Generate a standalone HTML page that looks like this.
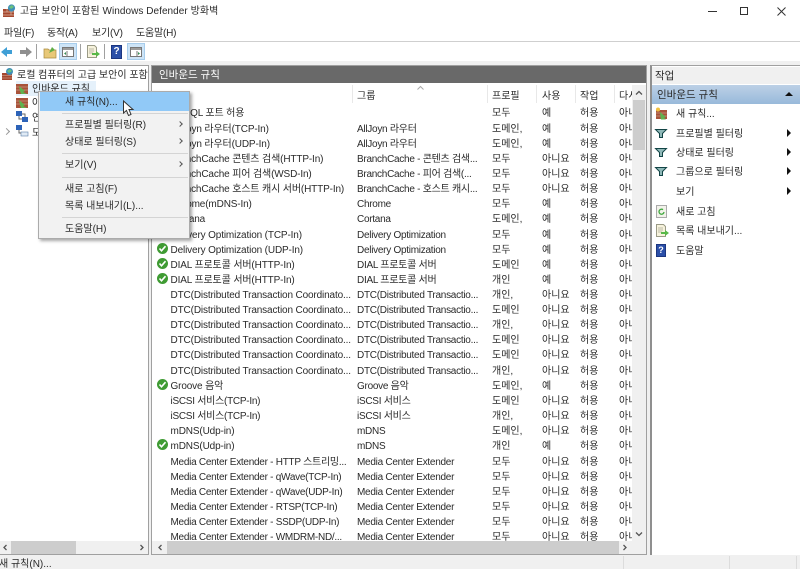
<!DOCTYPE html>
<html lang="ko"><head><meta charset="utf-8"><title>고급 보안이 포함된 Windows Defender 방화벽</title>
<style>
*{box-sizing:border-box}
html,body{margin:0;padding:0;width:800px;height:569px;overflow:hidden;background:#fff}
#w{position:absolute;left:0;top:0;width:800px;height:569px;overflow:hidden;font:10px/14px "Liberation Sans","Noto Sans CJK KR",sans-serif;color:#2a2a2a;filter:blur(.3px);background:#fff}
.a{position:absolute;white-space:nowrap}
.r{position:absolute;left:0;width:632px;height:15px;white-space:nowrap}
.r span{position:absolute;top:4px;line-height:14px;overflow:hidden}
.n{left:170.500px;width:182px;letter-spacing:-.14px}.g{left:357px;width:130px;letter-spacing:-.27px}.p{left:492px;width:45px}.u{left:542px;width:34px}.c{left:580px;width:34px}.d{left:619px;width:13px}
.t .n{letter-spacing:-.27px}
.s{position:absolute;left:62px;width:126px;height:1px;background:#d4d4d4}
.m{position:absolute;left:65px;white-space:nowrap}
.ar{position:absolute;left:178px;width:4px;height:4px;border-top:1px solid #555;border-right:1px solid #555;transform:rotate(45deg)}
.ra{position:absolute;left:676px;white-space:nowrap}
.tri{position:absolute;left:787px;width:0;height:0;border-left:4px solid #111;border-top:4px solid transparent;border-bottom:4px solid transparent}
.hs{position:absolute;top:85px;width:1px;height:18px;background:#e8e8e8}
.ck{position:absolute;left:157px;width:11px;height:11px}
svg{position:absolute;overflow:visible}
</style></head><body><div id="w">

<!-- window chrome -->
<svg style="left:2px;top:3px" width="15" height="15" viewBox="0 0 15 15"><rect x="1" y="6" width="11" height="8" fill="#a5482f"/><path d="M1 9h11M1 12h11M5 6v3M9 9v3" stroke="#dcb9a5" stroke-width=".7"/><circle cx="9.500" cy="5" r="3.600" fill="#3f8fb8"/><path d="M7 4l3-2 2 2-3 2z" fill="#6cc27c"/></svg>
<div class="a" style="left:20px;top:5px;font-size:10px;letter-spacing:.05px">고급 보안이 포함된 Windows Defender 방화벽</div>
<div class="a" style="left:708px;top:11px;width:9px;height:1px;background:#333"></div>
<div class="a" style="left:740px;top:7px;width:8px;height:8px;border:1px solid #333"></div>
<svg style="left:777px;top:7px" width="9" height="9" viewBox="0 0 9 9"><path d="M.5.5l8 8M8.500.5l-8 8" stroke="#333" fill="none"/></svg>

<div class="a" style="left:4px;top:27px;letter-spacing:-.2px">파일(F)</div>
<div class="a" style="left:47px;top:27px;letter-spacing:-.2px">동작(A)</div>
<div class="a" style="left:92px;top:27px;letter-spacing:-.2px">보기(V)</div>
<div class="a" style="left:136px;top:27px;letter-spacing:-.2px">도움말(H)</div>
<div class="a" style="left:0;top:41px;width:800px;height:1px;background:#cfcfcf"></div>

<!-- toolbar -->
<svg style="left:0;top:45px" width="34" height="14" viewBox="0 0 34 14"><path d="M1 7l6-5v3h5v4H7v3z" fill="#3f9fd6"/><path d="M32 7l-6-5v3h-6v4h6v3z" fill="#8f8f8f"/></svg>
<div class="a" style="left:36px;top:44px;width:1px;height:15px;background:#a0a0a0"></div>
<svg style="left:43px;top:44px" width="14" height="15" viewBox="0 0 14 15"><path d="M1 5h4l1 1h7v8H1z" fill="#e8c878" stroke="#a98a3e" stroke-width=".7"/><path d="M6 9l3-6 3 3z" fill="#5fae46"/></svg>
<div class="a" style="left:59px;top:43px;width:18px;height:17px;background:#cde4f7;border:1px solid #a7cdec"></div>
<svg style="left:62px;top:47px" width="12" height="10" viewBox="0 0 12 10"><rect x=".5" y=".5" width="11" height="9" fill="#fff" stroke="#777"/><rect x="1" y="1" width="10" height="2" fill="#9b9b9b"/><path d="M5 4v5" stroke="#777"/><path d="M4 5v3L2 6.500z" fill="#3a8f55"/></svg>
<div class="a" style="left:80px;top:44px;width:1px;height:15px;background:#a0a0a0"></div>
<svg style="left:86px;top:45px" width="14" height="14" viewBox="0 0 14 14"><path d="M1.500.5h7l2 2v10h-9z" fill="#f6f2dc" stroke="#9a9a86"/><path d="M3 4h5M3 6h5M3 8h4" stroke="#a9a998" stroke-width=".7"/><path d="M6 8h4V6l4 3-4 3v-2H6z" fill="#58b848"/></svg>
<div class="a" style="left:104px;top:44px;width:1px;height:15px;background:#a0a0a0"></div>
<div class="a" style="left:111px;top:45px;width:11px;height:14px;background:#2b4fa8;border:1px solid #1c3680;color:#fff;font:bold 10px/12px 'Liberation Sans',sans-serif;text-align:center">?</div>
<div class="a" style="left:127px;top:43px;width:18px;height:17px;background:#cde4f7;border:1px solid #a7cdec"></div>
<svg style="left:130px;top:47px" width="12" height="10" viewBox="0 0 12 10"><rect x=".5" y=".5" width="11" height="9" fill="#fff" stroke="#777"/><rect x="1" y="1" width="10" height="2" fill="#9b9b9b"/><path d="M7 4v5" stroke="#777"/><path d="M8 5v3l2-1.500z" fill="#3a8f55"/></svg>

<!-- gutters -->
<div class="a" style="left:0;top:61px;width:800px;height:5px;background:#f0f0f0"></div>
<div class="a" style="left:148px;top:61px;width:4px;height:494px;background:#f0f0f0"></div>
<div class="a" style="left:646px;top:61px;width:4px;height:494px;background:#f0f0f0"></div>

<!-- left pane -->
<div class="a" style="left:0;top:65px;width:149px;height:490px;border-top:1px solid #a0a0a0;border-right:1px solid #a0a0a0;border-bottom:1px solid #a0a0a0;background:#fff"></div>
<svg style="left:1px;top:67px" width="14" height="14" viewBox="0 0 14 14"><rect x="1" y="6" width="10" height="7" fill="#a5482f"/><path d="M1 8.500h10M1 11h10" stroke="#dcb9a5" stroke-width=".6"/><circle cx="8.500" cy="4.500" r="3.500" fill="#3f8fb8"/><path d="M6 4l3-2 2 2-3 2z" fill="#6cc27c"/></svg>
<div class="a" style="left:17px;top:69px;width:131px;overflow:hidden">로컬 컴퓨터의 고급 보안이 포함</div>
<div class="a" style="left:16px;top:81px;width:80px;height:15px;background:#e5f1fb"></div>
<svg style="left:16px;top:83px" width="13" height="12" viewBox="0 0 13 12"><rect y="1" width="12" height="10" fill="#a8533a"/><path d="M0 4h12M0 7h12" stroke="#d9b5a2" stroke-width=".6"/><path d="M3 3l6 5-2 1 4 2H5l-1-3z" fill="#5fb24f"/></svg>
<div class="a" style="left:32px;top:83px">인바운드 규칙</div>
<svg style="left:16px;top:97px" width="13" height="12" viewBox="0 0 13 12"><rect y="1" width="12" height="10" fill="#a8533a"/><path d="M0 4h12M0 7h12" stroke="#d9b5a2" stroke-width=".6"/><path d="M3 3l6 5-2 1 4 2H5l-1-3z" fill="#5fb24f"/></svg>
<div class="a" style="left:32px;top:97px">아웃바운드 규칙</div>
<svg style="left:16px;top:111px" width="13" height="12" viewBox="0 0 13 12"><rect x="0" y="0" width="6" height="5" fill="#2d63b8"/><rect x="6" y="6" width="6" height="5" fill="#2d63b8"/><path d="M3 5v3h3M6 3h3v3" stroke="#666" fill="none"/></svg>
<div class="a" style="left:32px;top:112px">연결 보안 규칙</div>
<div class="a" style="left:4px;top:129px;width:5px;height:5px;border-top:1px solid #999;border-right:1px solid #999;transform:rotate(45deg)"></div>
<svg style="left:16px;top:125px" width="13" height="12" viewBox="0 0 13 12"><rect x="0" y="0" width="6" height="5" fill="#2d63b8"/><rect x="5" y="7" width="7" height="4" fill="#dfeaf5" stroke="#5c7fa8" stroke-width=".6"/><path d="M3 5v3h2" stroke="#666" fill="none"/></svg>
<div class="a" style="left:32px;top:127px">모니터링</div>
<!-- left scrollbar -->
<div class="a" style="left:0;top:541px;width:148px;height:13px;background:#f0f0f0"></div>
<div class="a" style="left:11px;top:541px;width:65px;height:13px;background:#cdcdcd"></div>
<svg style="left:2px;top:544px" width="6" height="7" viewBox="0 0 6 7"><path d="M4.500 1L2 3.500 4.500 6" stroke="#555" stroke-width="1.300" fill="none"/></svg>
<svg style="left:139px;top:544px" width="6" height="7" viewBox="0 0 6 7"><path d="M1.500 1L4 3.500 1.500 6" stroke="#555" stroke-width="1.300" fill="none"/></svg>

<!-- centre pane -->
<div class="a" style="left:151px;top:65px;width:496px;height:490px;border:1px solid #a0a0a0;background:#fff"></div>
<div class="a" style="left:152px;top:66px;width:494px;height:17px;background:#696969;color:#fff;padding:2px 0 0 7px;font-size:10.500px">인바운드 규칙</div>
<div class="a" style="left:357px;top:90px">그룹</div>
<svg style="left:417px;top:86px" width="7" height="4" viewBox="0 0 7 4"><path d="M.5 3.500L3.500.5l3 3" stroke="#aaa" fill="none"/></svg>
<div class="a" style="left:492px;top:90px">프로필</div>
<div class="a" style="left:542px;top:90px">사용</div>
<div class="a" style="left:580px;top:90px">작업</div>
<div class="a" style="left:619px;top:90px;width:13px;overflow:hidden">다시</div>
<div class="hs" style="left:352px"></div><div class="hs" style="left:487px"></div><div class="hs" style="left:536px"></div><div class="hs" style="left:575px"></div><div class="hs" style="left:614px"></div>

<div class="r" style="top:103px"><span class="n">MySQL 포트 허용</span><span class="g"></span><span class="p">모두</span><span class="u">예</span><span class="c">허용</span><span class="d">아니</span></div>
<div class="r" style="top:119px"><span class="n">AllJoyn 라우터(TCP-In)</span><span class="g">AllJoyn 라우터</span><span class="p">도메인,</span><span class="u">예</span><span class="c">허용</span><span class="d">아니</span></div>
<div class="r" style="top:134px"><span class="n">AllJoyn 라우터(UDP-In)</span><span class="g">AllJoyn 라우터</span><span class="p">도메인,</span><span class="u">예</span><span class="c">허용</span><span class="d">아니</span></div>
<div class="r" style="top:149px"><span class="n">BranchCache 콘텐츠 검색(HTTP-In)</span><span class="g">BranchCache - 콘텐츠 검색...</span><span class="p">모두</span><span class="u">아니요</span><span class="c">허용</span><span class="d">아니</span></div>
<div class="r" style="top:164px"><span class="n">BranchCache 피어 검색(WSD-In)</span><span class="g">BranchCache - 피어 검색(...</span><span class="p">모두</span><span class="u">아니요</span><span class="c">허용</span><span class="d">아니</span></div>
<div class="r" style="top:179px"><span class="n">BranchCache 호스트 캐시 서버(HTTP-In)</span><span class="g">BranchCache - 호스트 캐시...</span><span class="p">모두</span><span class="u">아니요</span><span class="c">허용</span><span class="d">아니</span></div>
<div class="r" style="top:194px"><span class="n">Chrome(mDNS-In)</span><span class="g">Chrome</span><span class="p">모두</span><span class="u">예</span><span class="c">허용</span><span class="d">아니</span></div>
<div class="r" style="top:209px"><span class="n">Cortana</span><span class="g">Cortana</span><span class="p">도메인,</span><span class="u">예</span><span class="c">허용</span><span class="d">아니</span></div>
<div class="r" style="top:225px"><span class="n">Delivery Optimization (TCP-In)</span><span class="g">Delivery Optimization</span><span class="p">모두</span><span class="u">예</span><span class="c">허용</span><span class="d">아니</span></div>
<div class="r" style="top:240px"><span class="n">Delivery Optimization (UDP-In)</span><span class="g">Delivery Optimization</span><span class="p">모두</span><span class="u">예</span><span class="c">허용</span><span class="d">아니</span></div>
<div class="r" style="top:255px"><span class="n">DIAL 프로토콜 서버(HTTP-In)</span><span class="g">DIAL 프로토콜 서버</span><span class="p">도메인</span><span class="u">예</span><span class="c">허용</span><span class="d">아니</span></div>
<div class="r" style="top:270px"><span class="n">DIAL 프로토콜 서버(HTTP-In)</span><span class="g">DIAL 프로토콜 서버</span><span class="p">개인</span><span class="u">예</span><span class="c">허용</span><span class="d">아니</span></div>
<div class="r" style="top:285px"><span class="n">DTC(Distributed Transaction Coordinato...</span><span class="g">DTC(Distributed Transactio...</span><span class="p">개인,</span><span class="u">아니요</span><span class="c">허용</span><span class="d">아니</span></div>
<div class="r" style="top:300px"><span class="n">DTC(Distributed Transaction Coordinato...</span><span class="g">DTC(Distributed Transactio...</span><span class="p">도메인</span><span class="u">아니요</span><span class="c">허용</span><span class="d">아니</span></div>
<div class="r" style="top:315px"><span class="n">DTC(Distributed Transaction Coordinato...</span><span class="g">DTC(Distributed Transactio...</span><span class="p">개인,</span><span class="u">아니요</span><span class="c">허용</span><span class="d">아니</span></div>
<div class="r" style="top:330px"><span class="n">DTC(Distributed Transaction Coordinato...</span><span class="g">DTC(Distributed Transactio...</span><span class="p">도메인</span><span class="u">아니요</span><span class="c">허용</span><span class="d">아니</span></div>
<div class="r" style="top:345px"><span class="n">DTC(Distributed Transaction Coordinato...</span><span class="g">DTC(Distributed Transactio...</span><span class="p">도메인</span><span class="u">아니요</span><span class="c">허용</span><span class="d">아니</span></div>
<div class="r" style="top:361px"><span class="n">DTC(Distributed Transaction Coordinato...</span><span class="g">DTC(Distributed Transactio...</span><span class="p">개인,</span><span class="u">아니요</span><span class="c">허용</span><span class="d">아니</span></div>
<div class="r" style="top:376px"><span class="n">Groove 음악</span><span class="g">Groove 음악</span><span class="p">도메인,</span><span class="u">예</span><span class="c">허용</span><span class="d">아니</span></div>
<div class="r t" style="top:391px"><span class="n">iSCSI 서비스(TCP-In)</span><span class="g">iSCSI 서비스</span><span class="p">도메인</span><span class="u">아니요</span><span class="c">허용</span><span class="d">아니</span></div>
<div class="r t" style="top:406px"><span class="n">iSCSI 서비스(TCP-In)</span><span class="g">iSCSI 서비스</span><span class="p">개인,</span><span class="u">아니요</span><span class="c">허용</span><span class="d">아니</span></div>
<div class="r" style="top:421px"><span class="n">mDNS(Udp-in)</span><span class="g">mDNS</span><span class="p">도메인,</span><span class="u">아니요</span><span class="c">허용</span><span class="d">아니</span></div>
<div class="r" style="top:436px"><span class="n">mDNS(Udp-in)</span><span class="g">mDNS</span><span class="p">개인</span><span class="u">예</span><span class="c">허용</span><span class="d">아니</span></div>
<div class="r t" style="top:452px"><span class="n">Media Center Extender - HTTP 스트리밍...</span><span class="g">Media Center Extender</span><span class="p">모두</span><span class="u">아니요</span><span class="c">허용</span><span class="d">아니</span></div>
<div class="r t" style="top:467px"><span class="n">Media Center Extender - qWave(TCP-In)</span><span class="g">Media Center Extender</span><span class="p">모두</span><span class="u">아니요</span><span class="c">허용</span><span class="d">아니</span></div>
<div class="r t" style="top:482px"><span class="n">Media Center Extender - qWave(UDP-In)</span><span class="g">Media Center Extender</span><span class="p">모두</span><span class="u">아니요</span><span class="c">허용</span><span class="d">아니</span></div>
<div class="r t" style="top:497px"><span class="n">Media Center Extender - RTSP(TCP-In)</span><span class="g">Media Center Extender</span><span class="p">모두</span><span class="u">아니요</span><span class="c">허용</span><span class="d">아니</span></div>
<div class="r t" style="top:512px"><span class="n">Media Center Extender - SSDP(UDP-In)</span><span class="g">Media Center Extender</span><span class="p">모두</span><span class="u">아니요</span><span class="c">허용</span><span class="d">아니</span></div>
<div class="r t" style="top:527px;height:14px;overflow:hidden"><span class="n">Media Center Extender - WMDRM-ND/...</span><span class="g">Media Center Extender</span><span class="p">모두</span><span class="u">아니요</span><span class="c">허용</span><span class="d">아니</span></div>

<!-- check icons -->
<svg class="ck" style="top:243px" viewBox="0 0 11 11"><circle cx="5.500" cy="5.500" r="5.500" fill="#3f9b33"/><path d="M2.500 5.500l2 2.300 4-4.600" stroke="#fff" stroke-width="1.600" fill="none"/></svg>
<svg class="ck" style="top:258px" viewBox="0 0 11 11"><circle cx="5.500" cy="5.500" r="5.500" fill="#3f9b33"/><path d="M2.500 5.500l2 2.300 4-4.600" stroke="#fff" stroke-width="1.600" fill="none"/></svg>
<svg class="ck" style="top:273px" viewBox="0 0 11 11"><circle cx="5.500" cy="5.500" r="5.500" fill="#3f9b33"/><path d="M2.500 5.500l2 2.300 4-4.600" stroke="#fff" stroke-width="1.600" fill="none"/></svg>
<svg class="ck" style="top:379px" viewBox="0 0 11 11"><circle cx="5.500" cy="5.500" r="5.500" fill="#3f9b33"/><path d="M2.500 5.500l2 2.300 4-4.600" stroke="#fff" stroke-width="1.600" fill="none"/></svg>
<svg class="ck" style="top:439px" viewBox="0 0 11 11"><circle cx="5.500" cy="5.500" r="5.500" fill="#3f9b33"/><path d="M2.500 5.500l2 2.300 4-4.600" stroke="#fff" stroke-width="1.600" fill="none"/></svg>

<!-- centre scrollbars -->
<div class="a" style="left:632px;top:85px;width:14px;height:456px;background:#f0f0f0"></div>
<div class="a" style="left:633px;top:100px;width:12px;height:50px;background:#cdcdcd"></div>
<svg style="left:635px;top:90px" width="8" height="6" viewBox="0 0 8 6"><path d="M1 4.500L4 1.500l3 3" stroke="#555" stroke-width="1.300" fill="none"/></svg>
<svg style="left:635px;top:531px" width="8" height="6" viewBox="0 0 8 6"><path d="M1 1.500L4 4.500l3-3" stroke="#555" stroke-width="1.300" fill="none"/></svg>
<div class="a" style="left:152px;top:541px;width:494px;height:13px;background:#f0f0f0"></div>
<div class="a" style="left:167px;top:541px;width:452px;height:13px;background:#cdcdcd"></div>
<svg style="left:157px;top:544px" width="6" height="7" viewBox="0 0 6 7"><path d="M4.500 1L2 3.500 4.500 6" stroke="#555" stroke-width="1.300" fill="none"/></svg>
<svg style="left:622px;top:544px" width="6" height="7" viewBox="0 0 6 7"><path d="M1.500 1L4 3.500 1.500 6" stroke="#555" stroke-width="1.300" fill="none"/></svg>

<!-- right pane -->
<div class="a" style="left:650px;top:65px;width:150px;height:490px;border-left:2px solid #8f8f8f;border-top:1px solid #a0a0a0;background:#fff"></div>
<div class="a" style="left:652px;top:67px;width:148px;height:17px;background:#f0f0f0;padding:2px 0 0 3px;font-size:10.500px">작업</div>
<div class="a" style="left:652px;top:85px;width:148px;height:19px;background:linear-gradient(#bcd0e6,#98b9da);padding:3px 0 0 5px;font-size:10.500px">인바운드 규칙</div>
<div class="a" style="left:785px;top:92px;width:0;height:0;border-left:4px solid transparent;border-right:4px solid transparent;border-bottom:4px solid #111"></div>
<svg style="left:655px;top:107px" width="13" height="13" viewBox="0 0 13 13"><rect x="1" y="3" width="11" height="9" fill="#a8533a"/><path d="M1 6h11M1 9h11" stroke="#d9b5a2" stroke-width=".6"/><path d="M5 5l6 5-2 .8 2 1.700H6l-.5-2z" fill="#5fb24f"/><circle cx="3" cy="2.500" r="2" fill="#f0c040"/></svg>
<div class="ra" style="top:108px">새 규칙...</div>
<svg style="left:655px;top:129px" width="12" height="9" viewBox="0 0 12 9"><path d="M.5.500h11L7.500 4.500v4h-3v-4z" fill="#8fb8b8" stroke="#124445" stroke-width="1"/></svg>
<div class="ra" style="top:128px">프로필별 필터링</div><div class="tri" style="top:129px"></div>
<svg style="left:655px;top:148px" width="12" height="9" viewBox="0 0 12 9"><path d="M.5.500h11L7.500 4.500v4h-3v-4z" fill="#8fb8b8" stroke="#124445" stroke-width="1"/></svg>
<div class="ra" style="top:147px">상태로 필터링</div><div class="tri" style="top:148px"></div>
<svg style="left:655px;top:167px" width="12" height="9" viewBox="0 0 12 9"><path d="M.5.500h11L7.500 4.500v4h-3v-4z" fill="#8fb8b8" stroke="#124445" stroke-width="1"/></svg>
<div class="ra" style="top:166px">그룹으로 필터링</div><div class="tri" style="top:167px"></div>
<div class="ra" style="top:186px">보기</div><div class="tri" style="top:187px"></div>
<svg style="left:656px;top:205px" width="11" height="13" viewBox="0 0 11 13"><rect x=".5" y=".5" width="10" height="12" fill="#f2f2ea" stroke="#aaa"/><path d="M8 7a2.500 2.500 0 1 1-1-2.300" stroke="#3fa83f" stroke-width="1.300" fill="none"/></svg>
<div class="ra" style="top:206px">새로 고침</div>
<svg style="left:655px;top:224px" width="14" height="14" viewBox="0 0 14 14"><path d="M1.500.5h7l2 2v10h-9z" fill="#f6f2dc" stroke="#9a9a86"/><path d="M3 4h5M3 6h5M3 8h4" stroke="#a9a998" stroke-width=".7"/><path d="M6 8h4V6l4 3-4 3v-2H6z" fill="#58b848"/></svg>
<div class="ra" style="top:225px">목록 내보내기...</div>
<div class="a" style="left:656px;top:244px;width:10px;height:13px;background:#2b4fa8;border:1px solid #1c3680;color:#fff;font:bold 9px/11px 'Liberation Sans',sans-serif;text-align:center">?</div>
<div class="ra" style="top:245px">도움말</div>

<!-- status bar -->
<div class="a" style="left:0;top:555px;width:800px;height:14px;background:#f0f0f0"></div>
<div class="a" style="left:-1px;top:559px;line-height:12px">새 규칙(N)...</div>
<div class="a" style="left:623px;top:556px;width:1px;height:13px;background:#dcdcdc"></div>
<div class="a" style="left:729px;top:556px;width:1px;height:13px;background:#dcdcdc"></div>
<div class="a" style="left:796px;top:556px;width:1px;height:13px;background:#dcdcdc"></div>

<!-- context menu -->
<div class="a" style="left:38px;top:91px;width:152px;height:148px;background:#f2f2f2;border:1px solid #ababab;box-shadow:2px 2px 3px rgba(0,0,0,.35)"></div>
<div class="a" style="left:40px;top:92px;width:149px;height:19px;background:#91c9f7"></div>
<div class="m" style="top:96px">새 규칙(N)...</div>
<div class="s" style="top:113px"></div>
<div class="m" style="top:119px">프로필별 필터링(R)</div><div class="ar" style="top:122px"></div>
<div class="m" style="top:136px">상태로 필터링(S)</div><div class="ar" style="top:139px"></div>
<div class="s" style="top:153px"></div>
<div class="m" style="top:159px">보기(V)</div><div class="ar" style="top:162px"></div>
<div class="s" style="top:177px"></div>
<div class="m" style="top:183px">새로 고침(F)</div>
<div class="m" style="top:200px">목록 내보내기(L)...</div>
<div class="s" style="top:217px"></div>
<div class="m" style="top:223px">도움말(H)</div>
<svg style="left:122px;top:100px" width="12" height="17" viewBox="0 0 12 17"><path d="M1.500 1v12l3-2.500 2 5 2.500-1-2-5h4z" fill="#fff" stroke="#333"/></svg>
</div></body></html>
